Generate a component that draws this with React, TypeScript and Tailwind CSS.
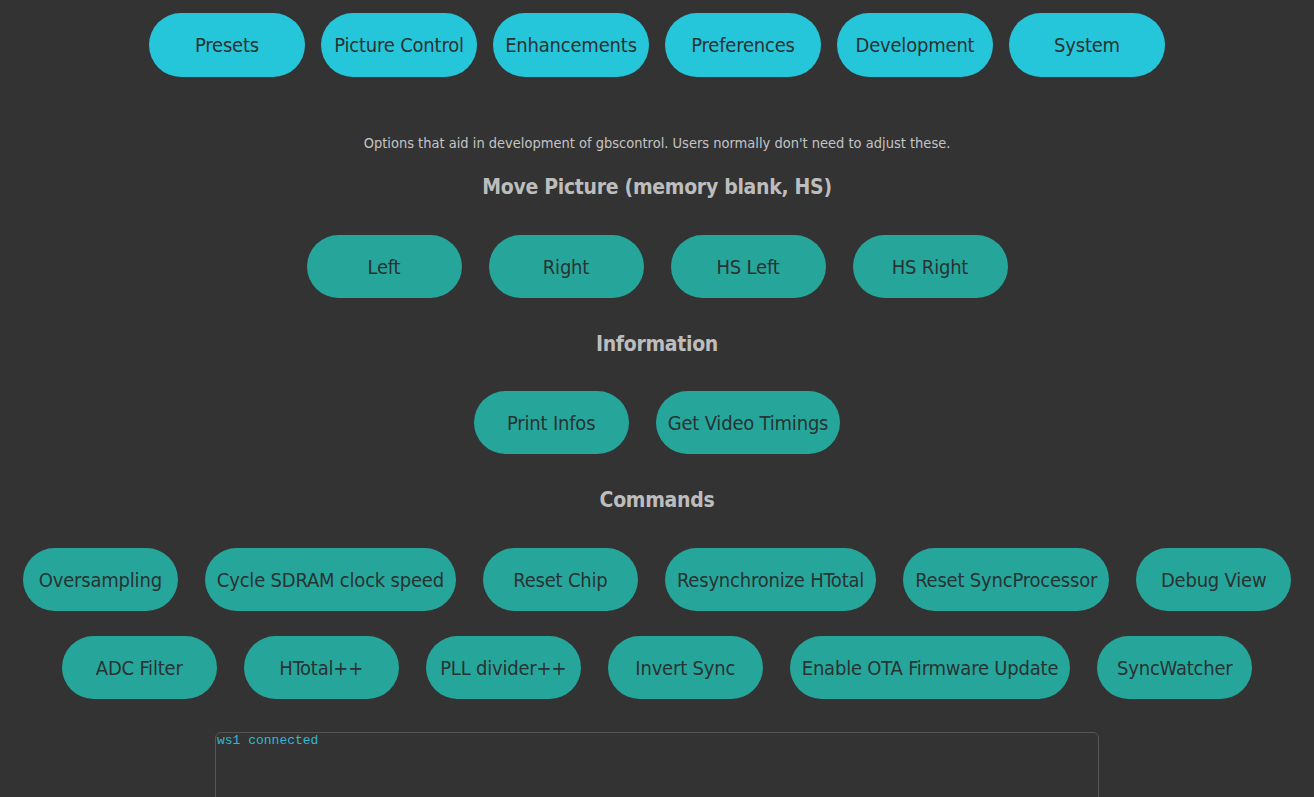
const navItems = ["Presets", "Picture Control", "Enhancements", "Preferences", "Development", "System"];

const movePicture = ["Left", "Right", "HS Left", "HS Right"];
const information = ["Print Infos", "Get Video Timings"];
const commandsRow1 = ["Oversampling", "Cycle SDRAM clock speed", "Reset Chip", "Resynchronize HTotal", "Reset SyncProcessor", "Debug View"];
const commandsRow2 = ["ADC Filter", "HTotal++", "PLL divider++", "Invert Sync", "Enable OTA Firmware Update", "SyncWatcher"];

function TealButton({ label }: { label: string }) {
  return (
    <button className="h-[63px] min-w-[155px] px-3 rounded-full bg-[#26a69a] text-[#283333] text-[20px] tracking-[-0.2px] leading-none whitespace-nowrap cursor-pointer">
      {label}
    </button>
  );
}

function ButtonRow({ items }: { items: string[] }) {
  return (
    <div className="flex justify-center gap-x-[27px]">
      {items.map((item) => (
        <TealButton key={item} label={item} />
      ))}
    </div>
  );
}

function Heading({ children }: { children: string }) {
  return (
    <h2 className="text-[21px] tracking-[-0.3px] font-bold leading-[30px] text-[#bdbdbd] text-center">{children}</h2>
  );
}

export default function App() {
  return (
    <div
      className="min-h-screen bg-[#333333] flex flex-col items-center overflow-hidden"
      style={{ fontFamily: '"DejaVu Sans Condensed", "Roboto", sans-serif' }}
    >
      {/* Top navigation */}
      <nav className="flex justify-center gap-x-4 pt-[13px]">
        {navItems.map((item) => (
          <button
            key={item}
            className="h-16 min-w-[156px] px-3 rounded-full bg-[#26c6da] text-[#283333] text-[20px] tracking-[-0.2px] leading-none whitespace-nowrap cursor-pointer"
          >
            {item}
          </button>
        ))}
      </nav>

      <p className="mt-[56px] text-[14.5px] leading-5 text-[#c4c4c4]">
        Options that aid in development of gbscontrol. Users normally don't need to adjust these.
      </p>

      <div className="mt-[19px]">
        <Heading>Move Picture (memory blank, HS)</Heading>
      </div>
      <div className="mt-[33px]">
        <ButtonRow items={movePicture} />
      </div>

      <div className="mt-[31px]">
        <Heading>Information</Heading>
      </div>
      <div className="mt-[32px]">
        <ButtonRow items={information} />
      </div>

      <div className="mt-[31px]">
        <Heading>Commands</Heading>
      </div>
      <div className="mt-[33px] flex flex-col gap-y-[25px]">
        <ButtonRow items={commandsRow1} />
        <ButtonRow items={commandsRow2} />
      </div>

      {/* Log output */}
      <div className="mt-[33px] w-[884px] h-[120px] border border-[#555555] rounded-md px-[1px]">
        <pre className="text-[13px] leading-[16px] text-[#2fb8d6]" style={{ fontFamily: '"Liberation Mono", monospace' }}>
          ws1 connected
        </pre>
      </div>
    </div>
  );
}
